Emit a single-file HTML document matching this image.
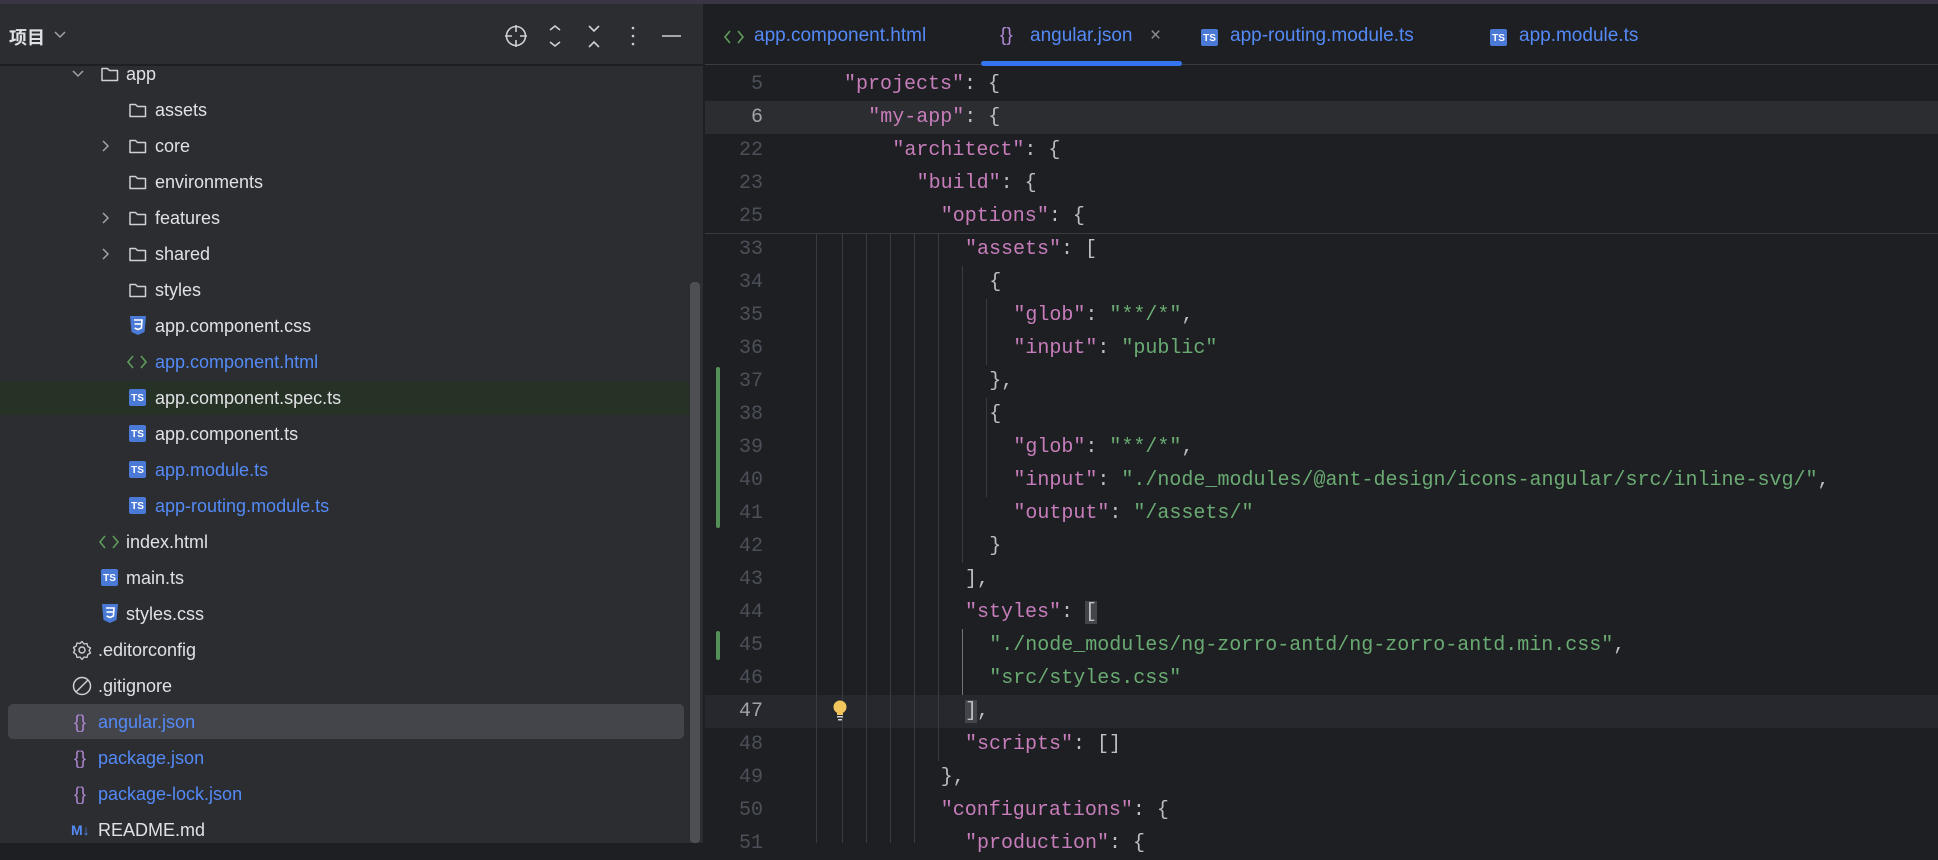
<!DOCTYPE html>
<html><head><meta charset="utf-8">
<style>
*{margin:0;padding:0;box-sizing:border-box}
body{width:1938px;height:843px;background:#1e1f22;overflow:hidden;position:relative;font-family:"Liberation Sans","Noto Sans CJK SC",sans-serif}
.abs{position:absolute}
#top{left:0;top:0;width:1938px;height:4px;background:#3a3446}
#side{left:0;top:4px;width:703px;height:839px;background:#2b2d30}
#hdrline{left:0;top:64px;width:703px;height:2px;background:#1e1f22}
.row{position:absolute;left:0;height:36px;width:703px;font-size:18px;color:#dfe1e5;line-height:36px;white-space:nowrap}
.row span.t{position:absolute}
.blue{color:#548af7!important}
.ico{position:absolute;top:8px}
.chev{position:absolute;top:11px}
#tabs{left:705px;top:4px;width:1233px;height:61px;background:#1e1f22;border-bottom:1px solid #393b40}
.tab{position:absolute;top:25px;font-size:19px;color:#548af7;white-space:nowrap}
.code{position:absolute;left:705px;width:1233px;height:33px;font-family:"Liberation Mono",monospace;font-size:20px;letter-spacing:0;line-height:33px;white-space:pre;color:#bcbec4}
.code .n{position:absolute;left:0;width:58px;text-align:right;color:#4b5059}
.code .c{position:absolute;left:139px}
.k{color:#c77dbb}.s{color:#6aab73}
.guide{position:absolute;width:1px;background:#393b40}
.chg{position:absolute;left:716px;width:4px;background:#549159;border-radius:2px}
</style></head><body>
<div class="abs" id="top"></div>
<div class="abs" id="side"></div>
<div class="abs" id="hdrline"></div>
<div class="abs" style="left:9px;top:24px;font-size:18px;font-weight:bold;color:#dfe1e5">项目</div>
<svg class="abs" style="left:53px;top:30px" width="14" height="10"><path d="M2 2l5 5 5-5" stroke="#a0a2a8" stroke-width="1.5" fill="none"/></svg>
<svg class="abs" style="left:500px;top:20px" width="190" height="34" fill="none" stroke="#ced0d6" stroke-width="1.6">
<circle cx="16" cy="16" r="9.5"/><path d="M16 5v7M16 20v7M5 16h7M20 16h7"/>
<path d="M50 10l5-4 5 4M50 22l5 4 5-4"/>
<path d="M89 6l5 5 5-5M89 27l5-5 5 5"/>
<circle cx="133" cy="8" r="1.3" fill="#ced0d6" stroke="none"/><circle cx="133" cy="16" r="1.3" fill="#ced0d6" stroke="none"/><circle cx="133" cy="24" r="1.3" fill="#ced0d6" stroke="none"/>
<path d="M162 16h19"/>
</svg>
<div class="abs" style="left:690px;top:282px;width:10px;height:561px;background:#4d4f53;border-radius:4px"></div>
<div class="abs" style="left:0;top:381px;width:689px;height:34px;background:#273227"></div>
<div class="abs" style="left:8px;top:704px;width:676px;height:35px;background:#43454a;border-radius:5px"></div>

<div id="tree"></div>
<div class="abs" id="tabs"></div>
<div class="abs" style="left:981px;top:61px;width:201px;height:5px;background:#3574f0;border-radius:3px"></div>
<svg class="abs" style="left:723px;top:28px" width="22" height="18" fill="none" stroke="#5f9c5c" stroke-width="1.6"><path d="M7 3L2 9l5 6M15 3l5 6-5 6"/></svg>
<div class="tab" style="left:754px">app.component.html</div>
<div class="tab" style="left:1000px;color:#b089d6">{}</div>
<div class="tab" style="left:1030px">angular.json</div>
<div class="tab" style="left:1150px;color:#8c8e94">×</div>
<div class="abs" style="left:1201px;top:29px;width:17px;height:17px;background:#4a7ad6;border-radius:2px;color:#fff;font-size:10px;font-weight:bold;text-align:center;line-height:19px">TS</div>
<div class="tab" style="left:1230px">app-routing.module.ts</div>
<div class="abs" style="left:1490px;top:29px;width:17px;height:17px;background:#4a7ad6;border-radius:2px;color:#fff;font-size:10px;font-weight:bold;text-align:center;line-height:19px">TS</div>
<div class="tab" style="left:1519px">app.module.ts</div>

<div class="abs" style="left:705px;top:101px;width:1233px;height:33px;background:#2b2d30"></div>
<div class="abs" style="left:705px;top:233px;width:1233px;height:1px;background:#393b40"></div>
<div class="abs" style="left:705px;top:695px;width:1233px;height:33px;background:#26282e"></div>
<div id="guides"></div>
<div id="code"></div>
<svg class="abs" style="left:831px;top:699px" width="18" height="24"><circle cx="9" cy="8" r="6.5" fill="#f2c55c"/><rect x="6" y="14" width="6" height="2" fill="#f2c55c"/><rect x="6" y="17" width="6" height="1.5" fill="#ced0d6"/><rect x="7" y="20" width="4" height="1.5" fill="#ced0d6"/></svg>

<script>
var rows=[
[78,108,126,'app','folder','down',0],
[null,136,155,'assets','folder'],
[105,136,155,'core','folder','right'],
[null,136,155,'environments','folder'],
[105,136,155,'features','folder','right'],
[105,136,155,'shared','folder','right'],
[null,136,155,'styles','folder'],
[null,136,155,'app.component.css','css'],
[null,136,155,'app.component.html','html',null,1],
[null,136,155,'app.component.spec.ts','ts'],
[null,136,155,'app.component.ts','ts'],
[null,136,155,'app.module.ts','ts',null,1],
[null,136,155,'app-routing.module.ts','ts',null,1],
[null,108,126,'index.html','html'],
[null,108,126,'main.ts','ts'],
[null,108,126,'styles.css','css'],
[null,80,98,'.editorconfig','gear'],
[null,80,98,'.gitignore','ban'],
[null,80,98,'angular.json','json',null,1],
[null,80,98,'package.json','json',null,1],
[null,80,98,'package-lock.json','json',null,1],
[null,80,98,'README.md','md']];
var h='';
rows.forEach(function(r,i){
 var top=56+36*i;
 h+='<div class="row" style="top:'+top+'px">';
 if(r[5]=='down')h+='<svg class="chev" style="left:'+(r[0]-7)+'px" width="14" height="14"><path d="M2 4l5 5 5-5" stroke="#a0a2a8" stroke-width="1.5" fill="none"/></svg>';
 if(r[5]=='right')h+='<svg class="chev" style="left:'+(r[0]-7)+'px" width="14" height="14"><path d="M5 2l5 5-5 5" stroke="#a0a2a8" stroke-width="1.5" fill="none"/></svg>';
 var x=r[1]-8,ic='';
 if(r[4]=='folder')ic='<svg class="ico" style="left:'+x+'px" width="20" height="20"><path d="M2 4.5h5.5l2 2H17.5v10H2z" stroke="#ced0d6" stroke-width="1.5" fill="none" stroke-linejoin="round"/></svg>';
 if(r[4]=='css')ic='<svg class="ico" style="left:'+x+'px;top:6px" width="20" height="24"><path d="M2 2h16l-1.5 16L10 21l-6.5-3z" fill="#4a7ad6"/><path d="M6 6h8l-.6 8L10 15.5 6.6 14" stroke="#fff" stroke-width="1.6" fill="none"/><path d="M6.5 10h7" stroke="#fff" stroke-width="1.6"/></svg>';
 if(r[4]=='html')ic='<svg class="ico" style="left:'+(x-2)+'px" width="22" height="20"><path d="M7 4L2 10l5 6M15 4l5 6-5 6" stroke="#5f9c5c" stroke-width="1.6" fill="none"/></svg>';
 if(r[4]=='ts')ic='<div class="ico" style="left:'+(x+1)+'px;top:9px;width:17px;height:17px;background:#4a7ad6;border-radius:2px;color:#fff;font-size:10px;font-weight:bold;text-align:center;line-height:19px">TS</div>';
 if(r[4]=='gear')ic='<svg class="ico" style="left:'+x+'px" width="20" height="20"><circle cx="10" cy="10" r="3" stroke="#ced0d6" stroke-width="1.4" fill="none"/><path d="M10 1.5l2 2.5 3-.5.8 3 2.7 1.5-1.4 2.5 1.4 2.5-2.7 1.5-.8 3-3-.5-2 2.5-2-2.5-3 .5-.8-3L1.5 12.5 2.9 10 1.5 7.5 4.2 6l.8-3 3 .5z" stroke="#ced0d6" stroke-width="1.3" fill="none" stroke-linejoin="round"/></svg>';
 if(r[4]=='ban')ic='<svg class="ico" style="left:'+x+'px" width="20" height="20"><circle cx="10" cy="10" r="8.5" stroke="#ced0d6" stroke-width="1.5" fill="none"/><path d="M4 16L16 4" stroke="#ced0d6" stroke-width="1.5"/></svg>';
 if(r[4]=='json')ic='<div class="ico" style="left:'+(x+2)+'px;top:0;color:#b089d6;font-size:18px">{}</div>';
 if(r[4]=='md')ic='<div class="ico" style="left:'+(x-1)+'px;top:0;color:#548af7;font-size:14px;font-weight:bold">M↓</div>';
 h+=ic+'<span class="t'+(r[6]?' blue':'')+'" style="left:'+r[2]+'px">'+r[3]+'</span></div>';
});
document.getElementById('tree').innerHTML=h;

var K=function(s){return '<span class="k">'+s+'</span>'},S=function(s){return '<span class="s">'+s+'</span>'};
var L=[
[5,0,K('"projects"')+': {'],
[6,1,K('"my-app"')+': {'],
[22,2,K('"architect"')+': {'],
[23,3,K('"build"')+': {'],
[25,4,K('"options"')+': {'],
[33,5,K('"assets"')+': ['],
[34,6,'{'],
[35,7,K('"glob"')+': '+S('"**/*"')+','],
[36,7,K('"input"')+': '+S('"public"')],
[37,6,'},'],
[38,6,'{'],
[39,7,K('"glob"')+': '+S('"**/*"')+','],
[40,7,K('"input"')+': '+S('"./node_modules/@ant-design/icons-angular/src/inline-svg/"')+','],
[41,7,K('"output"')+': '+S('"/assets/"')],
[42,6,'}'],
[43,5,'],'],
[44,5,K('"styles"')+': <span style="background:#43454a">[</span>'],
[45,6,S('"./node_modules/ng-zorro-antd/ng-zorro-antd.min.css"')+','],
[46,6,S('"src/styles.css"')],
[47,5,'<span style="background:#43454a">]</span>,'],
[48,5,K('"scripts"')+': []'],
[49,4,'},'],
[50,4,K('"configurations"')+': {'],
[51,5,K('"production"')+': {']];
var c='';
L.forEach(function(l,i){
 var top=68+33*i;
 var nc=(l[0]==47||l[0]==6)?'color:#a1a3ab':'';
 c+='<div class="code" style="top:'+top+'px"><span class="n" style="'+nc+'">'+l[0]+'</span><span class="c" style="left:'+(139+24.2*l[1])+'px">'+l[2]+'</span></div>';
});
document.getElementById('code').innerHTML=c;
var g='';
function G(x,y1,y2,col){g+='<div class="guide" style="left:'+x+'px;top:'+y1+'px;height:'+(y2-y1)+'px;background:'+(col||'#393b40')+'"></div>';}
[816,842,866,890,914].forEach(function(x){G(x,234,843)});
G(938,234,761);
G(962,266,563);
G(986,299,365);G(986,398,497);
G(962,629,695,'#6f737a');
document.getElementById('guides').innerHTML=g;
</script>
<div class="chg" style="top:367px;height:161px"></div>
<div class="chg" style="top:631px;height:29px"></div>
</body></html>
